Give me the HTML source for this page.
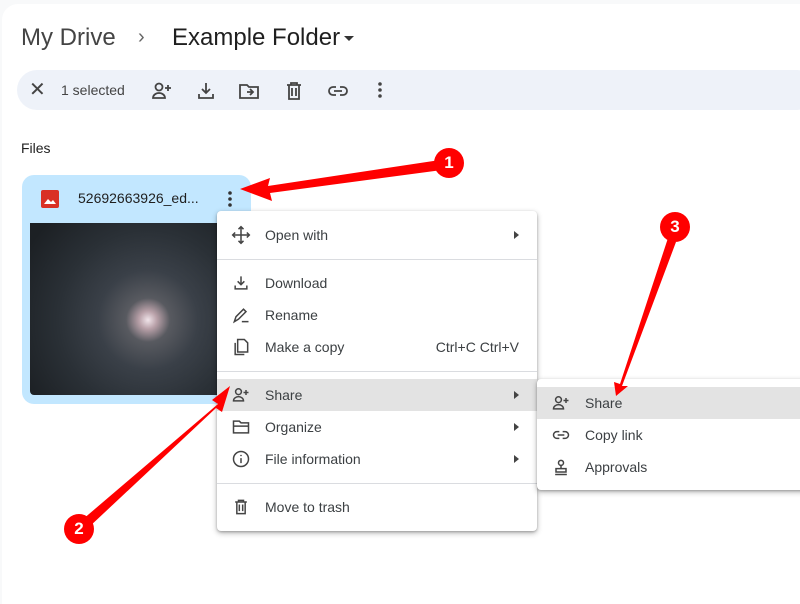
<!DOCTYPE html><html><head><style>
body{margin:0;width:800px;height:600px;background:#f8f9fa;font-family:"Liberation Sans",sans-serif;position:relative;overflow:hidden;color:#1f1f1f}
.main{position:absolute;left:2px;top:4px;width:800px;height:600px;background:#fff;border-radius:16px 0 0 0}
.a{position:absolute}
.menu{position:absolute;background:#fff;border-radius:4px;box-shadow:0 2px 6px rgba(0,0,0,.3),0 1px 2px rgba(0,0,0,.2)}
.it{position:absolute;left:0;right:0;height:32px;font-size:14px;line-height:32px;color:#3c4043}
.it span.t{position:absolute;left:48px}
.it svg{position:absolute;left:14px;top:6px}
.tri{position:absolute;right:18px;top:12px;width:0;height:0;border-left:5px solid #444;border-top:4px solid transparent;border-bottom:4px solid transparent}
.sep{position:absolute;left:0;right:0;height:1px;background:#dadce0}
.badge{position:absolute;width:30px;height:30px;border-radius:50%;background:#f00;color:#fff;font-size:17px;font-weight:bold;text-align:center;line-height:30px}
</style></head><body>
<div class="main"></div>
<div class="a" style="left:21px;top:24px;font-size:24px;color:#444">My Drive</div>
<div class="a" style="left:138px;top:26px;font-size:20px;color:#666">›</div>
<div class="a" style="left:172px;top:24px;font-size:24px;color:#1f1f1f">Example Folder</div>
<div class="a" style="left:344px;top:36px;border-top:5px solid #333;border-left:5px solid transparent;border-right:5px solid transparent"></div>
<div class="a" style="left:17px;top:70px;width:800px;height:40px;background:#eef2f9;border-radius:20px"></div>
<div class="a" style="left:29px;top:82px;font-size:20px;line-height:16px;color:#444">✕</div>
<div class="a" style="left:61px;top:82px;font-size:14px;color:#444">1 selected</div>
<svg class="a" style="left:150px;top:79px" width="24" height="24" viewBox="0 0 24 24" fill="none" stroke="#444" stroke-width="1.8"><circle cx="9" cy="8" r="3.5"/><path d="M3 19c0-3 3-5 6-5s6 2 6 5zM18 6v6M15 9h6"/></svg>
<svg class="a" style="left:194px;top:79px" width="24" height="24" viewBox="0 0 24 24" fill="none" stroke="#444" stroke-width="1.8"><path d="M12 4v10M8 10l4 4 4-4M5 15v4h14v-4"/></svg>
<svg class="a" style="left:237px;top:79px" width="24" height="24" viewBox="0 0 24 24" fill="none" stroke="#444" stroke-width="1.8"><path d="M3 6h7l2 2h9v11H3zM10 13h6M13 10l3 3-3 3"/></svg>
<svg class="a" style="left:282px;top:79px" width="24" height="24" viewBox="0 0 24 24" fill="none" stroke="#444" stroke-width="1.8"><path d="M5 6h14M9 6V4h6v2M7 6v14h10V6M10 9v8M14 9v8"/></svg>
<svg class="a" style="left:326px;top:79px" width="24" height="24" viewBox="0 0 24 24" fill="none" stroke="#444" stroke-width="1.8"><path d="M10 8H7a4 4 0 000 8h3M14 8h3a4 4 0 010 8h-3M8 12h8"/></svg>
<svg class="a" style="left:370px;top:79px" width="20" height="24" viewBox="0 0 20 24" fill="#444"><circle cx="10" cy="5" r="1.8"/><circle cx="10" cy="11" r="1.8"/><circle cx="10" cy="17" r="1.8"/></svg>
<div class="a" style="left:21px;top:140px;font-size:14px;color:#1f1f1f">Files</div>
<div class="a" style="left:22px;top:175px;width:229px;height:229px;background:#c2e7ff;border-radius:12px"></div>
<svg class="a" style="left:41px;top:190px" width="18" height="18" viewBox="0 0 18 18"><rect width="18" height="18" rx="2" fill="#d93025"/><path d="M3 14l4-5 3 3 2-2 3 4z" fill="#fff"/></svg>
<div class="a" style="left:78px;top:190px;font-size:14px">52692663926_ed...</div>
<svg class="a" style="left:220px;top:189px" width="20" height="20" viewBox="0 0 20 20" fill="#333"><circle cx="10" cy="4" r="1.8"/><circle cx="10" cy="10" r="1.8"/><circle cx="10" cy="16" r="1.8"/></svg>
<div class="a" style="left:30px;top:223px;width:200px;height:172px;background:radial-gradient(circle at 118px 97px,#f0e4ea 0,#b8a0a8 9px,#585a60 22px,#3a4048 50px,#2a3036 90px,#1c2024 140px);border-radius:0 0 4px 4px"></div>
<div class="menu" style="left:217px;top:211px;width:320px;height:320px">
<div class="it" style="top:8px"><svg width="20" height="20" viewBox="0 0 24 24" fill="none" stroke="#444" stroke-width="1.8"><path d="M12 2v20M2 12h20M9 5l3-3 3 3M9 19l3 3 3-3M5 9l-3 3 3 3M19 9l3 3-3 3"/></svg><span class="t">Open with</span><div class="tri"></div></div>
<div class="sep" style="top:48px"></div>
<div class="it" style="top:56px"><svg width="20" height="20" viewBox="0 0 24 24" fill="none" stroke="#444" stroke-width="1.8"><path d="M12 4v10M8 10l4 4 4-4M5 15v4h14v-4"/></svg><span class="t">Download</span></div>
<div class="it" style="top:88px"><svg width="20" height="20" viewBox="0 0 24 24" fill="none" stroke="#444" stroke-width="1.8"><path d="M4 20l2-6 9-9 3 3-9 9zM13 20h8"/></svg><span class="t">Rename</span></div>
<div class="it" style="top:120px"><svg width="20" height="20" viewBox="0 0 24 24" fill="none" stroke="#444" stroke-width="1.8"><path d="M8 3h8l4 4v11H8zM5 7v14h11"/></svg><span class="t">Make a copy</span><span style="position:absolute;right:18px">Ctrl+C Ctrl+V</span></div>
<div class="sep" style="top:160px"></div>
<div class="it" style="top:168px;background:#e3e3e3"><svg width="20" height="20" viewBox="0 0 24 24" fill="none" stroke="#444" stroke-width="1.8"><circle cx="9" cy="8" r="3.5"/><path d="M3 19c0-3 3-5 6-5s6 2 6 5zM18 6v6M15 9h6"/></svg><span class="t">Share</span><div class="tri"></div></div>
<div class="it" style="top:200px"><svg width="20" height="20" viewBox="0 0 24 24" fill="none" stroke="#444" stroke-width="1.8"><path d="M3 5h7l2 2h9v12H3zM3 11h18"/></svg><span class="t">Organize</span><div class="tri"></div></div>
<div class="it" style="top:232px"><svg width="20" height="20" viewBox="0 0 24 24" fill="none" stroke="#444" stroke-width="1.8"><circle cx="12" cy="12" r="9"/><path d="M12 11v6M12 7v1.5"/></svg><span class="t">File information</span><div class="tri"></div></div>
<div class="sep" style="top:272px"></div>
<div class="it" style="top:280px"><svg width="20" height="20" viewBox="0 0 24 24" fill="none" stroke="#444" stroke-width="1.8"><path d="M5 6h14M9 6V4h6v2M7 6v14h10V6M10 9v8M14 9v8"/></svg><span class="t">Move to trash</span></div>
</div>
<div class="menu" style="left:537px;top:379px;width:280px;height:111px">
<div class="it" style="top:8px;background:#e3e3e3"><svg width="20" height="20" viewBox="0 0 24 24" fill="none" stroke="#444" stroke-width="1.8"><circle cx="9" cy="8" r="3.5"/><path d="M3 19c0-3 3-5 6-5s6 2 6 5zM18 6v6M15 9h6"/></svg><span class="t">Share</span></div>
<div class="it" style="top:40px"><svg width="20" height="20" viewBox="0 0 24 24" fill="none" stroke="#444" stroke-width="1.8"><path d="M10 8H7a4 4 0 000 8h3M14 8h3a4 4 0 010 8h-3M8 12h8"/></svg><span class="t">Copy link</span></div>
<div class="it" style="top:72px"><svg width="20" height="20" viewBox="0 0 24 24" fill="none" stroke="#444" stroke-width="1.8"><circle cx="12" cy="7" r="3"/><path d="M12 10v4M6 14h12v4H6zM5 21h14"/></svg><span class="t">Approvals</span></div>
</div>
<svg class="a" style="left:0;top:0" width="800" height="600">
<g fill="#f00" stroke="none">
<polygon points="440,160 268,186 270,178 240,189 272,201 270,193 442,170"/>
<polygon points="82,520 218,404 212,400 230,386 222,412 216,408 88,528"/>
<polygon points="668,238 620,384 614,382 616,396 628,386 622,386 676,242"/>
</g></svg>
<div class="badge" style="left:434px;top:148px">1</div>
<div class="badge" style="left:64px;top:514px">2</div>
<div class="badge" style="left:660px;top:212px">3</div>
</body></html>
